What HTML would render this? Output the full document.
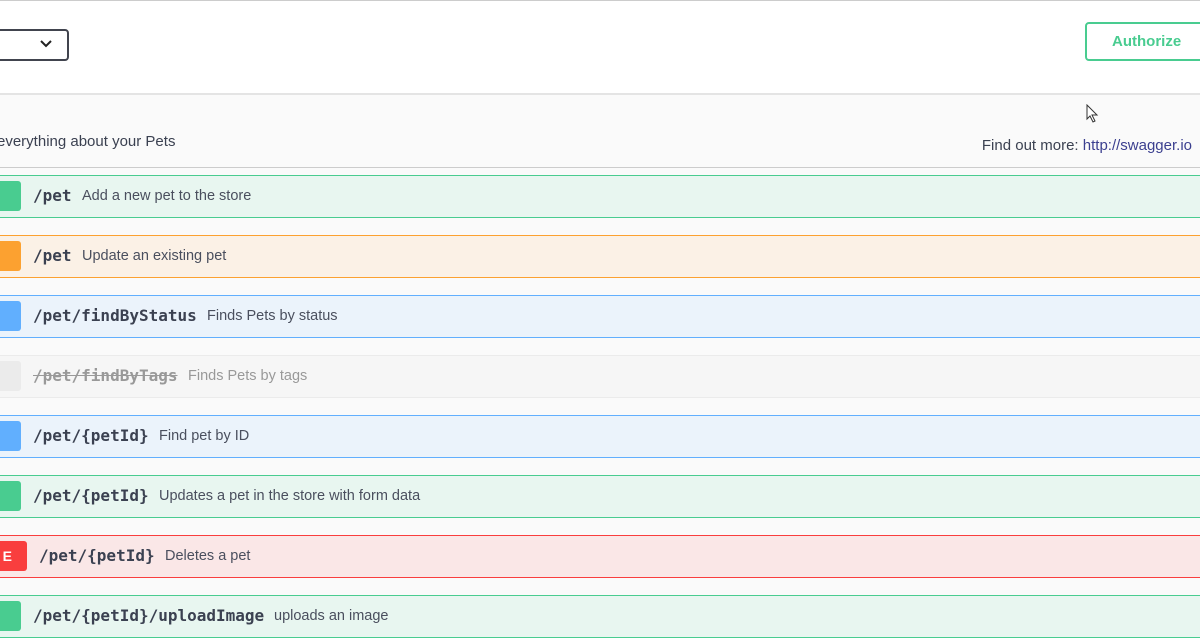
<!DOCTYPE html>
<html><head><style>
body{margin:0;width:1200px;height:630px;overflow:hidden;background:#fafafa;font-family:"Liberation Sans",sans-serif;color:#3b4151;position:relative}
.top{position:absolute;left:0;top:0;width:1200px;height:92px;background:#fff;border-top:1px solid #ccc;border-bottom:2px solid #e4e4e4}
.sel{position:absolute;left:-20px;top:28px;width:85px;height:28px;border:2px solid #41444e;border-radius:4px;background:#fff}
.auth{position:absolute;left:1085px;top:21px;width:130px;height:35px;border:2px solid #49cc90;border-radius:4px;color:#49cc90;font-weight:bold;font-size:15px;line-height:35px;padding-left:25px;box-sizing:content-box}
.tag{position:absolute;left:-3px;top:133px;font-size:15px}
.more{position:absolute;right:8px;top:137px;font-size:15px}
.more span{color:#3b3f8f}
.hl{position:absolute;left:0;top:167px;width:1200px;height:1px;background:#ccc}
.op{position:absolute;left:0;width:1200px;height:43px}
.op i{position:absolute;left:0;width:1200px;height:1px;display:block}
.op i.t{top:0}.op i.u{bottom:0}
.b{position:absolute;left:-10px;top:6px;width:31px;height:30px;border-radius:3px}
.p{position:absolute;left:33px;top:11px;font-family:"DejaVu Sans Mono","Liberation Mono",monospace;font-weight:bold;font-size:16px;color:#3b4151}
.d{position:absolute;top:13px;font-size:14.5px;color:#4a4f5e}
</style></head><body>
<div class="top">
<div class="sel"><svg style="position:absolute;left:58px;top:9px" width="12" height="8"><path d="M1 1 L6 6 L11 1" stroke="#222" stroke-width="2" fill="none"/></svg></div>
<div class="auth">Authorize</div>
</div>
<svg style="position:absolute;left:1086px;top:104px" width="14" height="20"><path d="M1 1 L1 15 L4 12 L7 18 L9 17 L6 11 L11 11 Z" fill="#fff" stroke="#333" stroke-width="1"/></svg>
<div class="tag">everything about your Pets</div>
<div class="more">Find out more: <span>http://swagger.io</span></div>
<div class="hl"></div>

<div class="op" style="top:175px;background:#e8f6f0"><i class="t" style="background:#49cc90"></i><i class="u" style="background:#49cc90"></i><div class="b" style="background:#49cc90"></div><div class="p">/pet</div><div class="d" style="left:82px">Add a new pet to the store</div></div>
<div class="op" style="top:235px;background:#fbf1e6"><i class="t" style="background:#fca130"></i><i class="u" style="background:#fca130"></i><div class="b" style="background:#fca130"></div><div class="p">/pet</div><div class="d" style="left:82px">Update an existing pet</div></div>
<div class="op" style="top:295px;background:#ebf3fb"><i class="t" style="background:#61affe"></i><i class="u" style="background:#61affe"></i><div class="b" style="background:#61affe"></div><div class="p">/pet/findByStatus</div><div class="d" style="left:207px">Finds Pets by status</div></div>
<div class="op" style="top:355px;background:#f6f6f6"><i class="t" style="background:#ebebeb"></i><i class="u" style="background:#ebebeb"></i><div class="b" style="background:#ebebeb"></div><div class="p" style="color:#999;text-decoration:line-through">/pet/findByTags</div><div class="d" style="left:188px;color:#999">Finds Pets by tags</div></div>
<div class="op" style="top:415px;background:#ebf3fb"><i class="t" style="background:#61affe"></i><i class="u" style="background:#61affe"></i><div class="b" style="background:#61affe"></div><div class="p">/pet/{petId}</div><div class="d" style="left:159px">Find pet by ID</div></div>
<div class="op" style="top:475px;background:#e8f6f0"><i class="t" style="background:#49cc90"></i><i class="u" style="background:#49cc90"></i><div class="b" style="background:#49cc90"></div><div class="p">/pet/{petId}</div><div class="d" style="left:159px">Updates a pet in the store with form data</div></div>
<div class="op" style="top:535px;background:#fae7e7"><i class="t" style="background:#f93e3e"></i><i class="u" style="background:#f93e3e"></i><div class="b" style="background:#f93e3e;width:37px;color:#fff;font-weight:bold;font-size:14px;line-height:30px;text-align:right;box-sizing:border-box;padding-right:15px">E</div><div class="p" style="left:39px">/pet/{petId}</div><div class="d" style="left:165px">Deletes a pet</div></div>
<div class="op" style="top:595px;background:#e8f6f0"><i class="t" style="background:#49cc90"></i><i class="u" style="background:#49cc90"></i><div class="b" style="background:#49cc90"></div><div class="p">/pet/{petId}/uploadImage</div><div class="d" style="left:274px">uploads an image</div></div>
</body></html>
